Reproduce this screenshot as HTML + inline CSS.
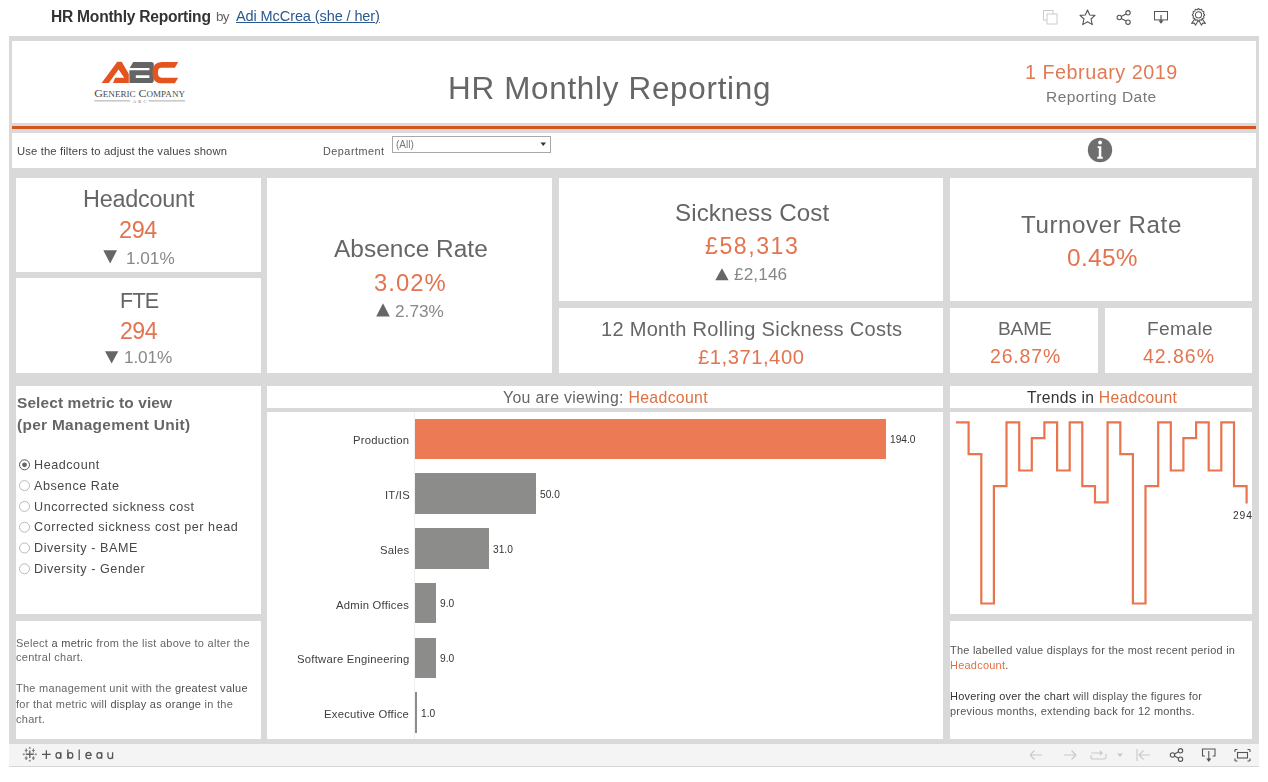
<!DOCTYPE html>
<html><head><meta charset="utf-8"><title>HR Monthly Reporting</title>
<style>
html,body{margin:0;padding:0;width:1268px;height:782px;overflow:hidden;background:#fff;font-family:"Liberation Sans",sans-serif;}
.t{position:absolute;white-space:nowrap;will-change:transform;}
.p{position:absolute;background:#fff;}
svg{position:absolute;overflow:visible;}
</style></head><body>
<!-- frame -->
<div style="position:absolute;left:9px;top:36px;width:1250px;height:708px;background:#d9d9d9"></div>
<div class="p" style="left:12px;top:41px;width:1244px;height:82px"></div>
<div style="position:absolute;left:12px;top:126px;width:1244px;height:3px;background:#d4551f"></div>
<div class="p" style="left:12px;top:133px;width:1244px;height:35px"></div>
<!-- KPI panels -->
<div class="p" style="left:16px;top:178px;width:245px;height:94px"></div>
<div class="p" style="left:16px;top:278px;width:245px;height:95px"></div>
<div class="p" style="left:267px;top:178px;width:285px;height:195px"></div>
<div class="p" style="left:559px;top:178px;width:384px;height:123px"></div>
<div class="p" style="left:559px;top:308px;width:384px;height:65px"></div>
<div class="p" style="left:950px;top:178px;width:302px;height:123px"></div>
<div class="p" style="left:950px;top:308px;width:148px;height:65px"></div>
<div class="p" style="left:1105px;top:308px;width:147px;height:65px"></div>
<!-- bottom panels -->
<div class="p" style="left:16px;top:386px;width:245px;height:228px"></div>
<div class="p" style="left:16px;top:621px;width:245px;height:118px"></div>
<div class="p" style="left:267px;top:386px;width:676px;height:22px"></div>
<div class="p" style="left:267px;top:412px;width:676px;height:327px"></div>
<div class="p" style="left:950px;top:386px;width:302px;height:22px"></div>
<div class="p" style="left:950px;top:412px;width:302px;height:202px"></div>
<div class="p" style="left:950px;top:621px;width:302px;height:118px"></div>
<!-- footer -->
<div style="position:absolute;left:9px;top:744px;width:1250px;height:22px;background:#f4f4f4;border-bottom:1px solid #d6d6d6"></div>

<!-- dropdown -->
<div style="position:absolute;left:392px;top:136px;width:157px;height:15px;border:1px solid #a8a8a8;background:#fff"></div>
<div class="t" style="left:396px;top:139.5px;font-size:10px;line-height:10px;color:#777">(All)</div>
<svg style="left:540px;top:142px" width="7" height="5"><path d="M0.5 0.5 L6 0.5 L3.25 4 Z" fill="#333"/></svg>
<!-- info icon -->
<svg style="left:1087px;top:137px" width="26" height="26" viewBox="0 0 26 26">
<circle cx="13" cy="13" r="12.2" fill="#6e6e6e"/>
<circle cx="13.1" cy="5.5" r="1.9" fill="#fff"/>
<path d="M10.6 9.2 H14.3 V19.7 H15.8 V21.7 H10.3 V19.7 H11.8 V10.9 H10.6 Z" fill="#fff"/>
</svg>

<!-- logo -->
<svg style="left:0;top:0" width="200" height="110" viewBox="0 0 200 110">
 <path d="M101.6 83.1 L117.3 61.8 H121.7 L128.8 74 V83.1 H113 L115.2 77.7 H124.2 L118.6 69.5 L108.8 83.1 Z" fill="#e4541e"/>
 <path fill-rule="evenodd" d="M133.2 62 H151.3 Q153.8 62 153.8 64.8 V80.3 Q153.8 83.1 151 83.1 H129.4 V70.2 H149.4 V68 H129.7 Z M135.8 75.2 H149.4 V78 H135.8 Z" fill="#646464"/>
 <path d="M161.8 62 H178.2 L174.9 67.7 H161.2 Q157.9 67.7 157.9 72.6 Q157.9 77.7 161.5 77.7 H178.2 L174.9 83.3 H161.2 Q152.4 83.3 152.4 72.6 Q152.4 62 161.8 62 Z" fill="#e4541e"/>
 <text x="94.2" y="97.3" font-family="Liberation Serif" font-size="10.4" fill="#4a4a4a" textLength="90.8" lengthAdjust="spacingAndGlyphs">G<tspan font-size="7.9">ENERIC</tspan> C<tspan font-size="7.9">OMPANY</tspan></text>
 <rect x="94.2" y="100.4" width="36" height="1" fill="#aaa"/>
 <rect x="148.5" y="100.4" width="36.5" height="1" fill="#aaa"/>
 <text x="133" y="103.2" font-family="Liberation Serif" font-size="4.2" fill="#666" letter-spacing="2.3">ABC</text>
</svg>

<!-- top icons -->
<svg style="left:1043px;top:10px" width="16" height="15" viewBox="0 0 16 15"><rect x="0.5" y="0.5" width="9.5" height="9.5" fill="none" stroke="#ccc"/><rect x="4" y="4" width="10" height="10" fill="#fff" stroke="#ccc"/></svg>
<svg style="left:1079px;top:9px" width="17" height="17" viewBox="0 0 17 17"><path d="M8.5 1 L10.7 6 L16 6.4 L12 10 L13.3 15.6 L8.5 12.7 L3.7 15.6 L5 10 L1 6.4 L6.3 6 Z" fill="none" stroke="#555" stroke-width="1.1" stroke-linejoin="round"/></svg>
<svg style="left:1116px;top:10px" width="16" height="15" viewBox="0 0 16 15"><circle cx="12" cy="2.8" r="2.2" fill="none" stroke="#555" stroke-width="1.1"/><circle cx="3.3" cy="7.5" r="2.2" fill="none" stroke="#555" stroke-width="1.1"/><circle cx="12" cy="12.2" r="2.2" fill="none" stroke="#555" stroke-width="1.1"/><path d="M5.3 6.4 L10 3.9 M5.3 8.6 L10 11.1" stroke="#555" stroke-width="1.1"/></svg>
<svg style="left:1153px;top:10px" width="16" height="15" viewBox="0 0 16 15"><rect x="1.5" y="1.5" width="13" height="8.4" fill="none" stroke="#555" stroke-width="1"/><path d="M8 5 V11.5" stroke="#555" stroke-width="1.2"/><path d="M5.4 10.6 L8 13.8 L10.6 10.6 Z" fill="#555"/></svg>
<svg style="left:1190px;top:8px" width="17" height="18" viewBox="0 0 17 18"><path d="M8.50 0.50 L9.85 1.78 L11.65 1.34 L12.18 3.12 L13.96 3.65 L13.52 5.45 L14.80 6.80 L13.52 8.15 L13.96 9.95 L12.18 10.48 L11.65 12.26 L9.85 11.82 L8.50 13.10 L7.15 11.82 L5.35 12.26 L4.82 10.48 L3.04 9.95 L3.48 8.15 L2.20 6.80 L3.48 5.45 L3.04 3.65 L4.82 3.12 L5.35 1.34 L7.15 1.78 Z" fill="none" stroke="#555" stroke-width="1.05" stroke-linejoin="round"/><circle cx="8.5" cy="6.8" r="3.1" fill="none" stroke="#555" stroke-width="1.05"/><path d="M4.6 11 L1.6 15.6 L4.3 15.1 L5.6 17.1 L8 12.7 M12.4 11 L15.4 15.6 L12.7 15.1 L11.4 17.1 L9 12.7" fill="none" stroke="#555" stroke-width="1.05" stroke-linejoin="round"/></svg>

<!-- radios -->
<svg style="left:18px;top:458px" width="14" height="120" viewBox="0 0 14 120">
 <circle cx="6.5" cy="6.8" r="5" fill="none" stroke="#555" stroke-width="1"/><circle cx="6.5" cy="6.8" r="2.4" fill="#666"/>
 <circle cx="6.5" cy="27.6" r="5" fill="none" stroke="#bbb" stroke-width="1"/>
 <circle cx="6.5" cy="48.4" r="5" fill="none" stroke="#bbb" stroke-width="1"/>
 <circle cx="6.5" cy="69.2" r="5" fill="none" stroke="#bbb" stroke-width="1"/>
 <circle cx="6.5" cy="90" r="5" fill="none" stroke="#bbb" stroke-width="1"/>
 <circle cx="6.5" cy="110.8" r="5" fill="none" stroke="#bbb" stroke-width="1"/>
</svg>

<!-- bar chart -->
<div style="position:absolute;left:414px;top:412px;width:1px;height:327px;background:#f0f0f0"></div>
<div style="position:absolute;left:415px;top:418.5px;width:470.8px;height:40.5px;background:#eb7a55"></div><div style="position:absolute;left:415px;top:473.3px;width:120.6px;height:40.5px;background:#8c8c8b"></div><div style="position:absolute;left:415px;top:528.1px;width:74.4px;height:40.5px;background:#8c8c8b"></div><div style="position:absolute;left:415px;top:582.8px;width:20.9px;height:40.5px;background:#8c8c8b"></div><div style="position:absolute;left:415px;top:637.6px;width:20.9px;height:40.5px;background:#8c8c8b"></div><div style="position:absolute;left:415px;top:692.4px;width:2.0px;height:40.5px;background:#8c8c8b"></div>

<!-- trend line -->
<svg style="left:0;top:0" width="1268" height="782">
<path id="trend" d="M956.0 422.3 H968.6 V454.2 H981.3 V603.5 H993.9 V486.2 H1006.5 V422.3 H1019.2 V470.5 H1031.8 V438.2 H1044.4 V422.3 H1057.1 V470.5 H1069.7 V422.3 H1082.3 V486.2 H1095.0 V502.4 H1107.6 V422.3 H1120.3 V454.2 H1132.9 V603.5 H1145.5 V486.2 H1158.2 V422.3 H1170.8 V470.5 H1183.4 V438.2 H1196.1 V422.3 H1208.7 V470.5 H1221.3 V422.3 H1234.0 V486.2 H1246.6 V503.5" fill="none" stroke="#e8754d" stroke-width="2.2"/>
</svg>

<!-- triangles -->
<svg style="left:103px;top:250px" width="15" height="14"><path d="M0.3 0.3 H14 L7.15 13.5 Z" fill="#666"/></svg>
<svg style="left:105px;top:351px" width="14" height="13"><path d="M0 0.3 H13.3 L6.65 12.5 Z" fill="#666"/></svg>
<svg style="left:376px;top:303px" width="15" height="14"><path d="M0.2 13.5 H13.8 L7 0.3 Z" fill="#666"/></svg>
<svg style="left:715px;top:268px" width="15" height="13"><path d="M0.3 12.3 H13.6 L6.95 0.2 Z" fill="#666"/></svg>

<!-- footer: tableau logo -->
<svg style="left:0;top:0" width="130" height="782" viewBox="0 0 130 782">
 <g stroke="#666" fill="none">
  <path d="M25.8 754.3 H33.8 M29.8 750.6 V758" stroke-width="1.4"/>
  <path d="M26.2 748.6 V752.4 M24.8 750.5 H27.6 M33.4 748.6 V752.4 M32 750.5 H34.8 M26.2 756.2 V760 M24.8 758.1 H27.6 M33.4 756.2 V760 M32 758.1 H34.8" stroke-width="1.1" opacity=".85"/>
  <path d="M22.6 754.3 H25 M23.8 753.2 V755.4 M34.6 754.3 H37 M35.8 753.2 V755.4 M28.7 747.9 H30.9 M29.8 746.9 V749 M28.7 760.7 H30.9 M29.8 759.7 V761.8" stroke-width="1" opacity=".6"/>
 </g>
 <g stroke="#555" fill="none" stroke-width="1.25">
  <path d="M42 754.3 H50.7 M46.35 750.3 V759"/>
  <ellipse cx="58.4" cy="755.45" rx="2.4" ry="2.75"/><path d="M60.8 752.3 V758.7"/>
  <path d="M67.8 749.4 V758.7"/><ellipse cx="70.4" cy="755.45" rx="2.4" ry="2.75"/>
  <path d="M79.2 749.4 V759.9"/>
  <path d="M85.9 755.3 H91.1 Q91.1 752.3 88.5 752.3 Q85.9 752.3 85.9 755.45 Q85.9 758.6 88.6 758.6 Q90.3 758.6 91 757.6"/>
  <ellipse cx="99.3" cy="755.45" rx="2.4" ry="2.75"/><path d="M101.7 752.3 V758.7"/>
  <path d="M107.9 752.2 V755.8 Q107.9 758.6 110.3 758.6 Q112.6 758.6 112.6 755.8 M112.6 752.2 V758.7"/>
 </g>
</svg>

<!-- footer icons -->
<svg style="left:1028px;top:748px" width="230" height="16" viewBox="0 0 230 16">
 <g fill="none" stroke="#c8c8c8" stroke-width="1.1">
  <path d="M2 7 H14 M2 7 L6.5 2.5 M2 7 L6.5 11.5"/>
  <path d="M36 7 H48 M48 7 L43.5 2.5 M48 7 L43.5 11.5"/>
  <path d="M63 5 H74 L72 3 M74 5 L72 7 M78 6 V9.5 Q78 11 76 11 H65 Q63 11 63 9 V7"/>
  <path d="M109 1 V13 M111 7 H122 M111 7 L115.5 2.5 M111 7 L115.5 11.5"/>
 </g>
 <path d="M89 5.5 H95 L92 9 Z" fill="#c8c8c8"/>
 <g fill="none" stroke="#555" stroke-width="1.1">
  <circle cx="152.5" cy="2.8" r="2.2"/><circle cx="144.5" cy="7" r="2.2"/><circle cx="152.5" cy="11.2" r="2.2"/>
  <path d="M146.5 6 L150.5 3.8 M146.5 8 L150.5 10.2"/>
  <path d="M177 8 H174.5 V1 H187 V8 H184.5 M180.8 3 V12"/>
 </g>
 <path d="M178.3 10.5 L180.8 14 L183.3 10.5 Z" fill="#555"/>
 <g fill="none" stroke="#555" stroke-width="1.1">
  <path d="M207 1.5 H209.5 M207 1.5 V4 M222 1.5 H219.5 M222 1.5 V4 M207 13 H209.5 M207 13 V10.5 M222 13 H219.5 M222 13 V10.5"/>
  <rect x="209.5" y="4.5" width="10" height="5.5"/>
 </g>
</svg>

<div class="t" style="left:51.00px;top:8.84px;font-size:15.60px;line-height:15.60px;letter-spacing:-0.245px;color:#333;font-weight:bold;">HR Monthly Reporting</div>
<div class="t" style="left:215.50px;top:10.22px;font-size:13.50px;line-height:13.50px;letter-spacing:-0.759px;color:#666;font-weight:normal;">by</div>
<div class="t" style="left:236.00px;top:8.84px;font-size:14.54px;line-height:14.54px;letter-spacing:-0.107px;color:#29598f;font-weight:normal;text-decoration:underline;">Adi McCrea (she / her)</div>
<div class="t" style="left:447.60px;top:73.20px;font-size:31.41px;line-height:31.41px;letter-spacing:0.707px;color:#666;font-weight:normal;">HR Monthly Reporting</div>
<div class="t" style="left:1025.30px;top:62.69px;font-size:19.78px;line-height:19.78px;letter-spacing:0.507px;color:#e07b56;font-weight:normal;">1 February 2019</div>
<div class="t" style="left:1045.50px;top:89.12px;font-size:15.50px;line-height:15.50px;letter-spacing:0.442px;color:#777;font-weight:normal;">Reporting Date</div>
<div class="t" style="left:16.60px;top:146.34px;font-size:11.25px;line-height:11.25px;letter-spacing:0.135px;color:#444;font-weight:normal;">Use the filters to adjust the values shown</div>
<div class="t" style="left:323.40px;top:146.09px;font-size:10.84px;line-height:10.84px;letter-spacing:0.498px;color:#555;font-weight:normal;">Department</div>
<div class="t" style="left:82.70px;top:187.80px;font-size:23.41px;line-height:23.41px;letter-spacing:-0.229px;color:#666;font-weight:normal;">Headcount</div>
<div class="t" style="left:119.30px;top:218.90px;font-size:23.41px;line-height:23.41px;letter-spacing:-0.331px;color:#e27450;font-weight:normal;">294</div>
<div class="t" style="left:125.50px;top:249.58px;font-size:17.20px;line-height:17.20px;letter-spacing:-0.018px;color:#888;font-weight:normal;">1.01%</div>
<div class="t" style="left:119.60px;top:289.74px;font-size:21.60px;line-height:21.60px;letter-spacing:-0.800px;color:#666;font-weight:normal;">FTE</div>
<div class="t" style="left:119.70px;top:319.55px;font-size:23.12px;line-height:23.12px;letter-spacing:-0.488px;color:#e27450;font-weight:normal;">294</div>
<div class="t" style="left:124.00px;top:349.48px;font-size:17.20px;line-height:17.20px;letter-spacing:-0.118px;color:#888;font-weight:normal;">1.01%</div>
<div class="t" style="left:333.70px;top:236.74px;font-size:24.43px;line-height:24.43px;letter-spacing:0.031px;color:#666;font-weight:normal;">Absence Rate</div>
<div class="t" style="left:374.00px;top:271.03px;font-size:23.85px;line-height:23.85px;letter-spacing:1.021px;color:#e27450;font-weight:normal;">3.02%</div>
<div class="t" style="left:394.70px;top:302.58px;font-size:17.20px;line-height:17.20px;letter-spacing:0.032px;color:#888;font-weight:normal;">2.73%</div>
<div class="t" style="left:674.90px;top:200.98px;font-size:24.14px;line-height:24.14px;letter-spacing:0.115px;color:#666;font-weight:normal;">Sickness Cost</div>
<div class="t" style="left:705.10px;top:234.55px;font-size:23.12px;line-height:23.12px;letter-spacing:1.555px;color:#e27450;font-weight:normal;">£58,313</div>
<div class="t" style="left:733.80px;top:266.28px;font-size:17.20px;line-height:17.20px;letter-spacing:0.118px;color:#888;font-weight:normal;">£2,146</div>
<div class="t" style="left:1021.40px;top:212.88px;font-size:24.14px;line-height:24.14px;letter-spacing:0.585px;color:#666;font-weight:normal;">Turnover Rate</div>
<div class="t" style="left:1066.50px;top:245.74px;font-size:24.43px;line-height:24.43px;letter-spacing:0.309px;color:#e27450;font-weight:normal;">0.45%</div>
<div class="t" style="left:600.60px;top:318.84px;font-size:20.07px;line-height:20.07px;letter-spacing:0.259px;color:#666;font-weight:normal;">12 Month Rolling Sickness Costs</div>
<div class="t" style="left:698.00px;top:346.52px;font-size:20.21px;line-height:20.21px;letter-spacing:0.538px;color:#e27450;font-weight:normal;">£1,371,400</div>
<div class="t" style="left:997.70px;top:319.09px;font-size:19.19px;line-height:19.19px;letter-spacing:-0.232px;color:#666;font-weight:normal;">BAME</div>
<div class="t" style="left:989.50px;top:347.04px;font-size:19.48px;line-height:19.48px;letter-spacing:0.843px;color:#e27450;font-weight:normal;">26.87%</div>
<div class="t" style="left:1146.60px;top:319.09px;font-size:19.19px;line-height:19.19px;letter-spacing:0.340px;color:#666;font-weight:normal;">Female</div>
<div class="t" style="left:1143.20px;top:347.04px;font-size:19.48px;line-height:19.48px;letter-spacing:0.983px;color:#e27450;font-weight:normal;">42.86%</div>
<div class="t" style="left:16.60px;top:395.30px;font-size:15.41px;line-height:15.41px;letter-spacing:0.131px;color:#666;font-weight:bold;">Select metric to view</div>
<div class="t" style="left:16.60px;top:416.90px;font-size:15.41px;line-height:15.41px;letter-spacing:0.311px;color:#666;font-weight:bold;">(per Management Unit)</div>
<div class="t" style="left:34.30px;top:458.90px;font-size:12.59px;line-height:12.59px;letter-spacing:0.551px;color:#484848;font-weight:normal;">Headcount</div>
<div class="t" style="left:34.30px;top:479.70px;font-size:12.59px;line-height:12.59px;letter-spacing:0.551px;color:#484848;font-weight:normal;">Absence Rate</div>
<div class="t" style="left:34.30px;top:500.50px;font-size:12.59px;line-height:12.59px;letter-spacing:0.551px;color:#484848;font-weight:normal;">Uncorrected sickness cost</div>
<div class="t" style="left:34.30px;top:521.30px;font-size:12.59px;line-height:12.59px;letter-spacing:0.551px;color:#484848;font-weight:normal;">Corrected sickness cost per head</div>
<div class="t" style="left:34.30px;top:542.10px;font-size:12.59px;line-height:12.59px;letter-spacing:0.551px;color:#484848;font-weight:normal;">Diversity - BAME</div>
<div class="t" style="left:34.30px;top:562.90px;font-size:12.59px;line-height:12.59px;letter-spacing:0.551px;color:#484848;font-weight:normal;">Diversity - Gender</div>
<div class="t" style="left:16.30px;top:637.57px;font-size:10.97px;line-height:10.97px;letter-spacing:0.285px;color:#666;font-weight:normal;">Select <span style="color:#4e4e4e">a metric</span> from the list above to alter the</div>
<div class="t" style="left:16.30px;top:651.97px;font-size:10.97px;line-height:10.97px;letter-spacing:0.285px;color:#666;font-weight:normal;">central chart.</div>
<div class="t" style="left:16.30px;top:683.47px;font-size:10.97px;line-height:10.97px;letter-spacing:0.285px;color:#666;font-weight:normal;">The management unit with the <span style="color:#4e4e4e">greatest value</span></div>
<div class="t" style="left:16.30px;top:698.67px;font-size:10.97px;line-height:10.97px;letter-spacing:0.285px;color:#666;font-weight:normal;">for that metric will <span style="color:#4e4e4e">display as orange</span> in the</div>
<div class="t" style="left:16.30px;top:714.07px;font-size:10.97px;line-height:10.97px;letter-spacing:0.285px;color:#666;font-weight:normal;">chart.</div>
<div class="t" style="left:503.00px;top:390.43px;font-size:15.85px;line-height:15.85px;letter-spacing:0.317px;color:#666;font-weight:normal;">You are viewing: <span style="color:#e07040">Headcount</span></div>
<div class="t" style="left:1026.80px;top:390.15px;font-size:15.70px;line-height:15.70px;letter-spacing:0.267px;color:#333;font-weight:normal;">Trends in <span style="color:#e07040">Headcount</span></div>
<div class="t" style="left:950.40px;top:644.57px;font-size:10.97px;line-height:10.97px;letter-spacing:0.243px;color:#555;font-weight:normal;">The labelled value displays for the most recent period in</div>
<div class="t" style="left:950.40px;top:659.97px;font-size:10.97px;line-height:10.97px;letter-spacing:0.243px;color:#e07040;font-weight:normal;">Headcount<span style="color:#555">.</span></div>
<div class="t" style="left:950.40px;top:691.07px;font-size:10.97px;line-height:10.97px;letter-spacing:0.243px;color:#555;font-weight:normal;"><span style="color:#333">Hovering over the chart</span> will display the figures for</div>
<div class="t" style="left:950.40px;top:705.77px;font-size:10.97px;line-height:10.97px;letter-spacing:0.243px;color:#555;font-weight:normal;">previous months, extending back for 12 months.</div>
<div class="t" style="left:1232.70px;top:510.86px;font-size:10.29px;line-height:10.29px;letter-spacing:0.867px;color:#333;font-weight:normal;">294</div>
<div class="t" style="left:353.23px;top:435.17px;font-size:11.27px;line-height:11.27px;letter-spacing:0.243px;color:#3d3d3d;font-weight:normal;">Production</div>
<div class="t" style="left:889.81px;top:435.08px;font-size:10.20px;line-height:10.20px;letter-spacing:0.000px;color:#333;font-weight:normal;">194.0</div>
<div class="t" style="left:384.53px;top:489.95px;font-size:11.27px;line-height:11.27px;letter-spacing:0.243px;color:#3d3d3d;font-weight:normal;">IT/IS</div>
<div class="t" style="left:539.60px;top:489.86px;font-size:10.20px;line-height:10.20px;letter-spacing:0.000px;color:#333;font-weight:normal;">50.0</div>
<div class="t" style="left:380.13px;top:544.73px;font-size:11.27px;line-height:11.27px;letter-spacing:0.243px;color:#3d3d3d;font-weight:normal;">Sales</div>
<div class="t" style="left:493.39px;top:544.64px;font-size:10.20px;line-height:10.20px;letter-spacing:0.000px;color:#333;font-weight:normal;">31.0</div>
<div class="t" style="left:336.43px;top:599.51px;font-size:11.27px;line-height:11.27px;letter-spacing:0.243px;color:#3d3d3d;font-weight:normal;">Admin Offices</div>
<div class="t" style="left:439.89px;top:599.42px;font-size:10.20px;line-height:10.20px;letter-spacing:0.000px;color:#333;font-weight:normal;">9.0</div>
<div class="t" style="left:296.91px;top:654.29px;font-size:11.27px;line-height:11.27px;letter-spacing:0.243px;color:#3d3d3d;font-weight:normal;">Software Engineering</div>
<div class="t" style="left:439.89px;top:654.20px;font-size:10.20px;line-height:10.20px;letter-spacing:0.000px;color:#333;font-weight:normal;">9.0</div>
<div class="t" style="left:324.42px;top:709.07px;font-size:11.27px;line-height:11.27px;letter-spacing:0.243px;color:#3d3d3d;font-weight:normal;">Executive Office</div>
<div class="t" style="left:421.00px;top:708.98px;font-size:10.20px;line-height:10.20px;letter-spacing:0.000px;color:#333;font-weight:normal;">1.0</div>
</body></html>
